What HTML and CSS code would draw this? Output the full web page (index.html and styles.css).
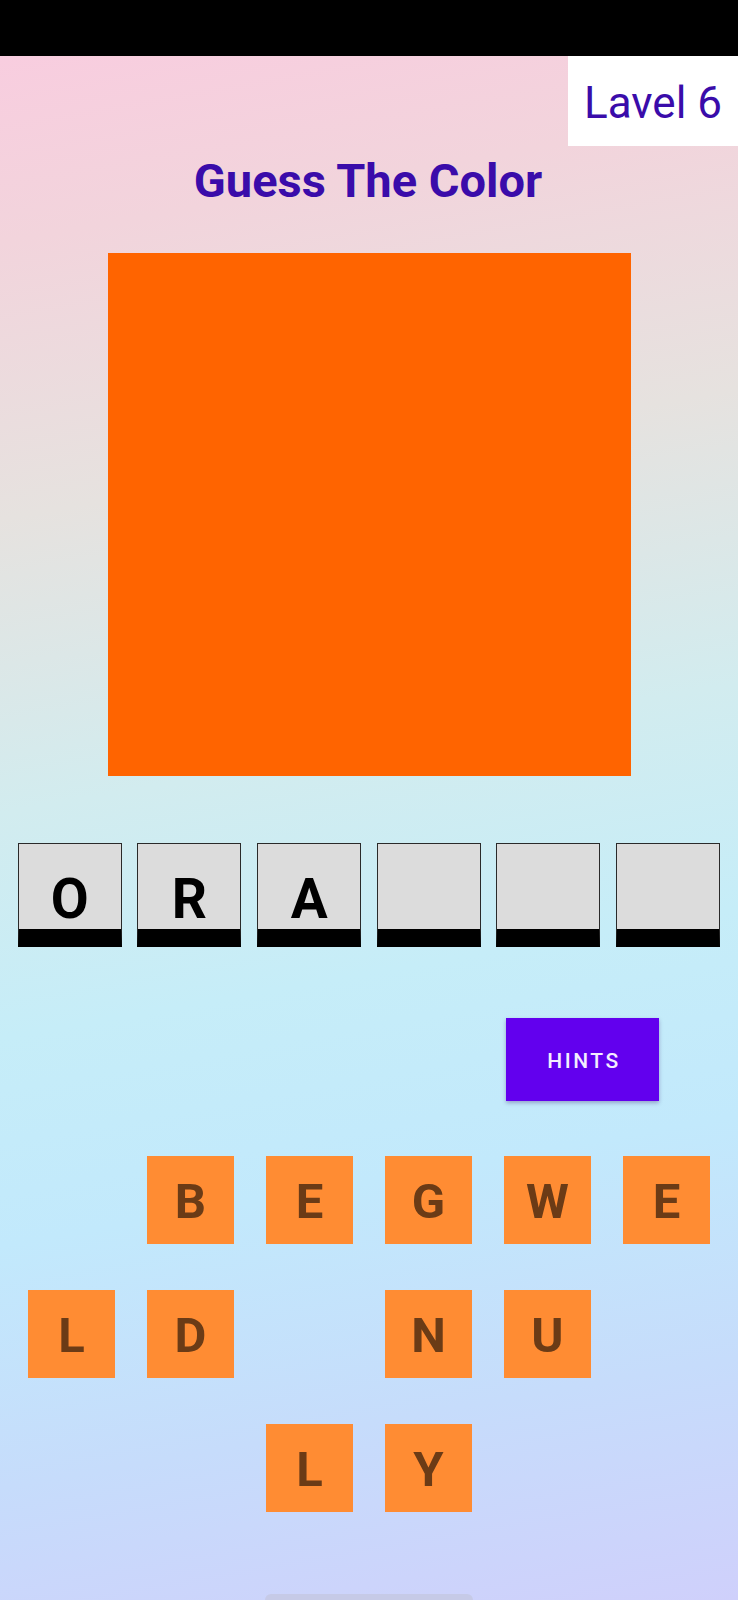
FILE: index.html
```html
<!DOCTYPE html>
<html lang="en">
<head>
<meta charset="utf-8">
<title>Guess The Color</title>
<link rel="stylesheet" href="styles.css">
</head>
<body>
<div class="screen">
  <div class="statusbar"></div>
  <div class="topbar">
    <div class="level">Lavel 6</div>
  </div>
  <h1 class="title">Guess The Color</h1>
  <div class="swatch"></div>
  <div class="answer">
    <div class="slot">O</div>
    <div class="slot">R</div>
    <div class="slot">A</div>
    <div class="slot"></div>
    <div class="slot"></div>
    <div class="slot"></div>
  </div>
  <div class="actions">
    <button class="hints">HINTS</button>
  </div>
  <div class="letters">
    <div class="tile empty"></div>
    <div class="tile">B</div>
    <div class="tile">E</div>
    <div class="tile">G</div>
    <div class="tile">W</div>
    <div class="tile">E</div>
    <div class="tile">L</div>
    <div class="tile">D</div>
    <div class="tile empty"></div>
    <div class="tile">N</div>
    <div class="tile">U</div>
    <div class="tile empty"></div>
    <div class="tile empty"></div>
    <div class="tile empty"></div>
    <div class="tile">L</div>
    <div class="tile">Y</div>
  </div>
  <div class="homebar"></div>
</div>
</body>
</html>
```
FILE: styles.css
```css
html, body {
  margin: 0;
  padding: 0;
}
body {
  width: 738px;
  height: 1600px;
  overflow: hidden;
  font-family: Roboto, "Liberation Sans", sans-serif;
}
.screen {
  width: 738px;
  height: 1600px;
  overflow: hidden;
  display: flex;
  flex-direction: column;
  background: linear-gradient(170deg,
    #facbe0 0%,
    #f2d4dc 14%,
    #e6e2df 30%,
    #d2ecef 47%,
    #c6edf8 60%,
    #c2e9fc 72%,
    #c6dcfb 86%,
    #cfd0fb 100%);
}
.statusbar {
  height: 56px;
  background: #000;
  flex: none;
}
.topbar {
  display: flex;
  justify-content: flex-end;
  flex: none;
}
.level {
  width: 170px;
  height: 90px;
  box-sizing: border-box;
  padding-top: 4px;
  background: #fff;
  color: #3a0caa;
  font-size: 44px;
  line-height: 86px;
  text-align: center;
}
.title {
  margin: 8px 0 0;
  font-size: 47px;
  line-height: 54px;
  font-weight: 700;
  color: #3a0caa;
  text-align: center;
  padding-right: 2px;
}
.swatch {
  width: 523px;
  height: 523px;
  margin: 45px auto 0;
  background: #ff6400;
  flex: none;
}
.answer {
  display: grid;
  grid-template-columns: repeat(6, 1fr);
  padding: 0 10px;
  margin-top: 67px;
}
.slot {
  justify-self: center;
  width: 102px;
  height: 60px;
  padding-top: 25px;
  border: 1px solid #2a2a2a;
  border-bottom: 18px solid #000;
  background: #dcdcdc;
  color: #000;
  font-size: 55px;
  font-weight: 700;
  line-height: 60px;
  text-align: center;
}
.actions {
  display: flex;
  justify-content: flex-end;
  padding-right: 79px;
  margin-top: 71px;
}
.hints {
  width: 153px;
  height: 83px;
  border: none;
  border-radius: 0;
  background: #6200ee;
  color: #f4eeff;
  font-family: Roboto, "Liberation Sans", sans-serif;
  font-size: 21px;
  font-weight: 500;
  letter-spacing: 2.5px;
  padding: 2px 0 0 3px;
  box-shadow: 0 2px 4px rgba(40, 0, 90, 0.3);
}
.letters {
  display: grid;
  grid-template-columns: repeat(6, 1fr);
  row-gap: 46px;
  padding: 0 12px;
  margin-top: 55px;
}
.tile {
  justify-self: center;
  width: 87px;
  height: 84px;
  padding-top: 4px;
  background: #ff8c33;
  color: #6b3b16;
  font-size: 49px;
  font-weight: 700;
  line-height: 84px;
  text-align: center;
}
.tile.empty {
  visibility: hidden;
}
.homebar {
  width: 208px;
  height: 12px;
  margin: 82px auto 0;
  border-radius: 6px;
  background: #c6cae7;
  flex: none;
}
```
